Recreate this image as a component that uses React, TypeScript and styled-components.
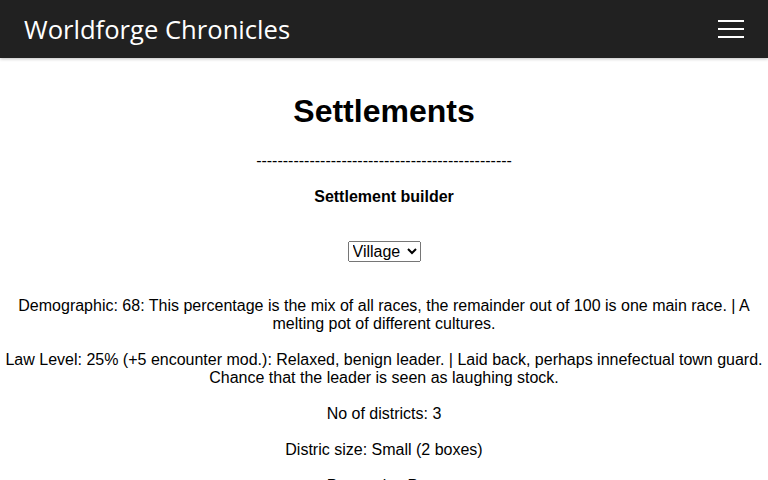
import React from "react";
import styled, { createGlobalStyle } from "styled-components";

const GlobalStyle = createGlobalStyle`
  html, body {
    margin: 0;
    padding: 0;
    background: #ffffff;
  }
  body {
    font-family: "Liberation Sans", Arial, sans-serif;
    font-size: 16px;
    color: #000000;
  }
`;

const NavBar = styled.header`
  height: 58px;
  box-sizing: border-box;
  padding: 0 24px;
  background: #212121;
  display: flex;
  align-items: center;
  justify-content: space-between;
  box-shadow: 0 1px 3px rgba(0, 0, 0, 0.25);
`;

const Brand = styled.div`
  font-family: "Open Sans", sans-serif;
  font-size: 25.6px;
  color: #ffffff;
  white-space: nowrap;
`;

const MenuButton = styled.button`
  width: 26px;
  padding: 0;
  border: none;
  background: transparent;
  display: flex;
  flex-direction: column;
  gap: 6px;
  cursor: pointer;
`;

const MenuLine = styled.span`
  display: block;
  width: 26px;
  height: 2px;
  background: #ffffff;
`;

const Main = styled.main`
  padding: 14px 2px 0;
  text-align: center;
`;

const Title = styled.h1`
  font-size: 32px;
  font-weight: bold;
  margin: 0.67em 0;
`;

const Line = styled.p<{ $bold?: boolean }>`
  margin: ${(p) => (p.$bold ? "18px 0 16px" : "16px 0")};
  font-weight: ${(p) => (p.$bold ? "bold" : "normal")};
`;

const SelectRow = styled.div`
  margin: 35.5px 0 35px;
`;

const Picker = styled.select`
  font-family: "Liberation Sans", Arial, sans-serif;
  font-size: 16px;
  color: #000;
`;

const Info = styled.p`
  margin: 18px 0;
  line-height: 18px;
`;

const info = [
  "Demographic: 68: This percentage is the mix of all races, the remainder out of 100 is one main race. | A melting pot of different cultures.",
  "Law Level: 25% (+5 encounter mod.): Relaxed, benign leader. | Laid back, perhaps innefectual town guard. Chance that the leader is seen as laughing stock.",
  "No of districts: 3",
  "Distric size: Small (2 boxes)",
  "Prosperity: Poor",
];

export default function App() {
  return (
    <>
      <GlobalStyle />
      <NavBar>
        <Brand>Worldforge Chronicles</Brand>
        <MenuButton aria-label="menu">
          <MenuLine />
          <MenuLine />
          <MenuLine />
        </MenuButton>
      </NavBar>
      <Main>
        <Title>Settlements</Title>
        <Line>------------------------------------------------</Line>
        <Line $bold>Settlement builder</Line>
        <SelectRow>
          <Picker defaultValue="Village">
            <option>Hamlet</option>
            <option>Village</option>
            <option>Town</option>
            <option>City</option>
          </Picker>
        </SelectRow>
        {info.map((t) => (
          <Info key={t}>{t}</Info>
        ))}
      </Main>
    </>
  );
}
